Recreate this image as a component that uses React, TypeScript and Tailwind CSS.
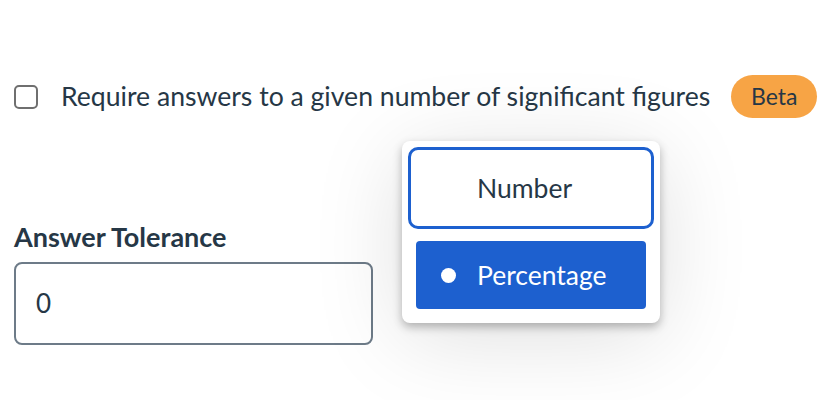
export default function App() {
  return (
    <div
      className="relative h-[400px] w-[838px] overflow-hidden bg-white text-[#263746]"
      style={{ fontFamily: 'Lato, "Open Sans", sans-serif' }}
    >
      {/* Significant figures option */}
      <div className="flex items-center px-[14px] pt-[75px]">
        <span className="h-[24px] w-[24px] shrink-0 rounded-[5px] border-2 border-[#6f6f6f] bg-white" />
        <span className="ml-[23px] whitespace-nowrap text-[26.6px] leading-[43px]">
          Require answers to a given number of significant figures
        </span>
        <span className="ml-[21px] flex h-[43px] w-[86px] shrink-0 items-center justify-center rounded-full bg-[#f7a445] text-[23px]">
          Beta
        </span>
      </div>

      {/* Tolerance */}
      <div className="px-[14px] pt-[104px]">
        <label className="block text-[27px] font-bold leading-[30px]">Answer Tolerance</label>
        <div className="mt-[10px] flex h-[83px] w-[359px] items-center rounded-[8px] border-2 border-[#6d7b88] px-[20px] text-[26px]">
          0
        </div>
      </div>

      {/* Unit menu */}
      <div className="absolute left-[402px] top-[141px] w-[258px] rounded-[8px] bg-white p-[6px] pb-[14px] shadow-[0_4px_10px_rgba(0,0,0,0.28),0_14px_90px_rgba(0,0,0,0.13)]">
        <div className="flex h-[82px] items-center rounded-[10px] border-[3px] border-[#1d60cf] pl-[66px] pt-[2px] text-[26.5px]">
          Number
        </div>
        <div className="mx-[8px] mt-[12px] flex h-[68px] items-center rounded-[4px] bg-[#1d60cf] pl-[25px] pt-[1px] text-[26.5px] text-white">
          <span className="h-[15px] w-[15px] shrink-0 rounded-full bg-white" />
          <span className="ml-[21px]">Percentage</span>
        </div>
      </div>
    </div>
  );
}
